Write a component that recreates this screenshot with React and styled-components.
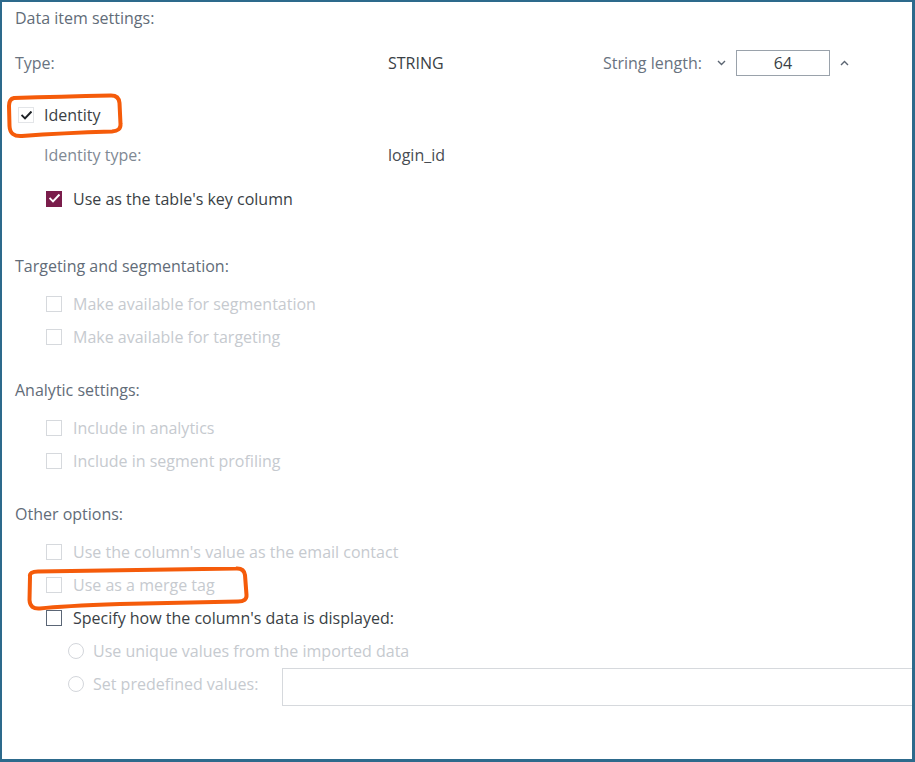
import React from 'react';
import styled, { createGlobalStyle } from 'styled-components';

const GlobalStyle = createGlobalStyle`
  html, body {
    margin: 0;
    padding: 0;
    background: #ffffff;
  }
  body {
    font-family: "Open Sans", Lato, "Liberation Sans", sans-serif;
    font-size: 16px;
    color: #3a3f45;
  }
`;

const Frame = styled.div`
  position: relative;
  width: 915px;
  height: 762px;
  box-sizing: border-box;
  border-style: solid;
  border-color: #2d6a8c;
  border-width: 2px 3px 3px 2px;
  padding-left: 13px;
  overflow: hidden;
  background: #fff;
`;

const Row = styled.div`
  display: flex;
  align-items: center;
  height: ${(p) => p.$h || 34}px;
  margin-top: ${(p) => p.$mt || 0}px;
  padding-left: ${(p) => p.$indent || 0}px;
  white-space: nowrap;
`;

const Heading = styled.span`
  color: #626c78;
`;

const Label = styled.span`
  width: ${(p) => p.$w}px;
  flex: none;
  color: ${(p) => p.$color || '#69737f'};
`;

const Value = styled.span`
  width: ${(p) => p.$w || 'auto'};
  flex: none;
  color: ${(p) => p.$color || '#3a3f45'};
`;

const ItemText = styled.span`
  width: ${(p) => p.$w || 'auto'};
  flex: none;
  color: ${(p) => (p.$disabled ? '#c6cacf' : '#3a3f45')};
`;

const Box = styled.span`
  flex: none;
  width: 16px;
  height: 16px;
  box-sizing: border-box;
  margin-right: ${(p) => p.$mr || 11}px;
  display: inline-flex;
  align-items: center;
  justify-content: center;
  border: ${(p) =>
    p.$variant === 'filled'
      ? 'none'
      : p.$variant === 'strong'
      ? '1.5px solid #5b6676'
      : p.$variant === 'faint'
      ? '1px solid #e3e5e8'
      : '1px solid #d6d9dd'};
  background: ${(p) => (p.$variant === 'filled' ? '#7a1d4b' : '#fff')};
`;

const Radio = styled.span`
  flex: none;
  width: 16px;
  height: 16px;
  box-sizing: border-box;
  border-radius: 50%;
  border: 1px solid #d3d6db;
  margin-right: 9px;
`;

const LengthGroup = styled.div`
  display: flex;
  align-items: center;
  color: #69737f;
`;

const Chevron = styled.svg`
  margin: 0 ${(p) => p.$mr || 0}px 0 ${(p) => p.$ml || 0}px;
  flex: none;
`;

const NumberBox = styled.div`
  width: 94px;
  height: 26px;
  box-sizing: border-box;
  border: 1px solid #9aa2ab;
  display: flex;
  align-items: center;
  justify-content: center;
  color: #3a3f45;
`;

const ValuesInput = styled.div`
  align-self: flex-start;
  margin-top: 1px;
  flex: 1;
  height: 38px;
  box-sizing: border-box;
  border: 1px solid #d6d9dd;
  border-right: none;
`;

const Annotations = styled.svg`
  position: absolute;
  left: -2px;
  top: -2px;
  pointer-events: none;
`;

const Check = ({ color }) => (
  <svg width="11" height="9" viewBox="0 0 11 9">
    <polyline
      points="1.2,4.6 4,7.4 9.8,1.2"
      fill="none"
      stroke={color}
      strokeWidth="2"
      strokeLinecap="square"
    />
  </svg>
);

const Checkbox = ({ variant, checked, checkColor, mr }) => (
  <Box $variant={variant} $mr={mr}>
    {checked && <Check color={checkColor} />}
  </Box>
);

const CheckRow = ({ children, disabled, variant, checked, indent = 31, mt }) => (
  <Row $h={33} $indent={indent} $mt={mt}>
    <Checkbox variant={variant || (disabled ? 'disabled' : 'strong')} checked={checked} checkColor="#fff" />
    <ItemText $disabled={disabled}>{children}</ItemText>
  </Row>
);

const RadioRow = ({ children, mt, labelWidth, extra }) => (
  <Row $h={33} $indent={53} $mt={mt}>
    <Radio />
    <ItemText $disabled $w={labelWidth}>{children}</ItemText>
    {extra}
  </Row>
);

export default function App() {
  return (
    <>
      <GlobalStyle />
      <Frame>
        <Row $h={32}>
          <Heading>Data item settings:</Heading>
        </Row>

        <Row $mt={12}>
          <Label $w={373}>Type:</Label>
          <Value $w="215px">STRING</Value>
          <LengthGroup>
            String length:
            <Chevron $ml={15} $mr={10} width="9" height="6" viewBox="0 0 9 6">
              <polyline points="1,1 4.5,4.5 8,1" fill="none" stroke="#5b6572" strokeWidth="1.4" />
            </Chevron>
            <NumberBox>64</NumberBox>
            <Chevron $ml={10} width="9" height="6" viewBox="0 0 9 6">
              <polyline points="1,5 4.5,1.5 8,5" fill="none" stroke="#5b6572" strokeWidth="1.4" />
            </Chevron>
          </LengthGroup>
        </Row>

        <Row $mt={18} $indent={3}>
          <Checkbox variant="faint" checked checkColor="#1e2226" mr={10} />
          <Value>Identity</Value>
        </Row>

        <Row $mt={6} $indent={29}>
          <Label $w={344} $color="#7f8994">Identity type:</Label>
          <Value $color="#474c52">login_id</Value>
        </Row>

        <CheckRow variant="filled" checked mt={10}>
          Use as the table's key column
        </CheckRow>

        <Row $mt={34}>
          <Heading>Targeting and segmentation:</Heading>
        </Row>
        <CheckRow disabled mt={4}>Make available for segmentation</CheckRow>
        <CheckRow disabled>Make available for targeting</CheckRow>

        <Row $mt={20}>
          <Heading>Analytic settings:</Heading>
        </Row>
        <CheckRow disabled mt={4}>Include in analytics</CheckRow>
        <CheckRow disabled>Include in segment profiling</CheckRow>

        <Row $mt={20}>
          <Heading>Other options:</Heading>
        </Row>
        <CheckRow disabled mt={4}>Use the column's value as the email contact</CheckRow>
        <CheckRow disabled>Use as a merge tag</CheckRow>
        <CheckRow>Specify how the column's data is displayed:</CheckRow>
        <RadioRow>Use unique values from the imported data</RadioRow>
        <RadioRow labelWidth="189px" extra={<ValuesInput />}>Set predefined values:</RadioRow>

        <Annotations width="915" height="762" viewBox="0 0 915 762">
          <g fill="none" stroke="#f55b0a" strokeWidth="4" strokeLinecap="round" strokeLinejoin="round">
            <path d="M14 98 Q60 96.5 111 95.5 Q119 95.5 119.5 103 L120.5 124 Q121 131 112 131.5 Q62 133 22 136 Q10 137 9.5 126 L9 106 Q9 99 14 98" />
            <path d="M30 577 Q29 571.5 38 571.5 L236 568.5 Q244 568 245 575 L246.5 595 Q247 601.5 238 601.5 L120 604 Q62 606 40 608.5 Q30 609.5 29.5 600 Z" />
          </g>
        </Annotations>
      </Frame>
    </>
  );
}
